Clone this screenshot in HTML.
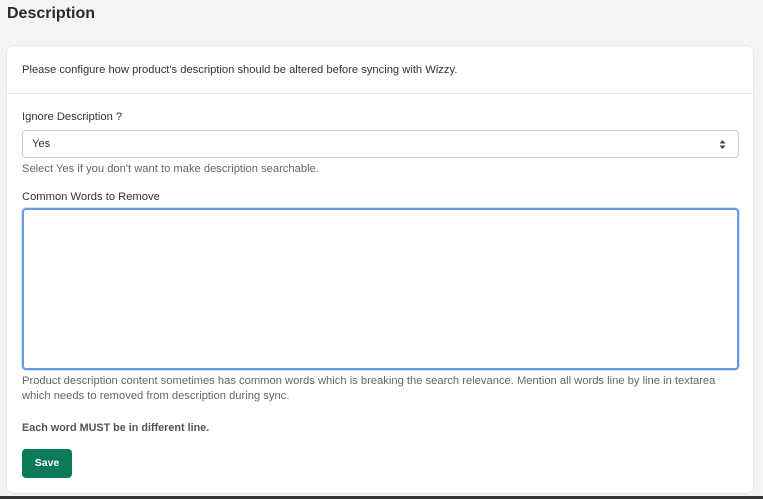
<!DOCTYPE html>
<html><head><style>
*{box-sizing:border-box;margin:0;padding:0}
body{width:763px;height:499px;background:#f3f4f6;font-family:"Liberation Sans",sans-serif;color:#212529;position:relative;overflow:hidden}
.h{position:absolute;left:7px;top:5px;font-size:16px;font-weight:600;color:#2a2a2a}
.card{position:absolute;left:6px;top:45px;width:748px;height:449px;background:#fff;border-radius:8px;border:1px solid #e5e7eb}
.t{position:absolute;font-size:11.2px;color:#333;white-space:nowrap}
.div{position:absolute;left:0;right:0;top:47px;border-top:1px solid #e3e3e3}
.sel{position:absolute;left:15px;top:84px;width:717px;height:28px;border:1px solid #c9ccd0;border-radius:4px}
.ta{position:absolute;left:15px;top:162px;width:717px;height:162px;border:2px solid #6b9ae8;border-radius:4px;box-shadow:0 0 0 1px #cfe0fb}
.btn{position:absolute;left:15px;top:403px;width:50px;height:29px;background:#0b7a5a;border-radius:4px;color:#fff;font-size:10.5px;font-weight:bold;text-align:center;line-height:29px}
.bot{position:absolute;left:0;right:0;top:496px;height:3px;background:#333}
</style></head><body>
<div class="h">Description</div>
<div class="card">
<div class="t" style="left:15px;top:18px">Please configure how product's description should be altered before syncing with Wizzy.</div>
<div class="div"></div>
<div class="t" style="left:15px;top:65px">Ignore Description ?</div>
<div class="sel"><span class="t" style="left:9px;top:7px">Yes</span><svg style="position:absolute;right:12px;top:8px" width="7" height="11" viewBox="0 0 7 11"><path d="M0.5 4.5L3.5 1L6.5 4.5Z M0.5 6.5L3.5 10L6.5 6.5Z" fill="#444"/></svg></div>
<div class="t" style="left:15px;top:117px;color:#666">Select Yes if you don't want to make description searchable.</div>
<div class="t" style="left:15px;top:145px">Common Words to Remove</div>
<div class="ta"></div>
<div class="t" style="left:15px;top:328px;color:#666;line-height:15px">Product description content sometimes has common words which is breaking the search relevance. Mention all words line by line in textarea<br>which needs to removed from description during sync.</div>
<div class="t" style="left:15px;top:376px;color:#555;font-weight:bold;font-size:10.8px">Each word MUST be in different line.</div>
<div class="btn">Save</div>
</div>
<div class="bot"></div>
</body></html>
